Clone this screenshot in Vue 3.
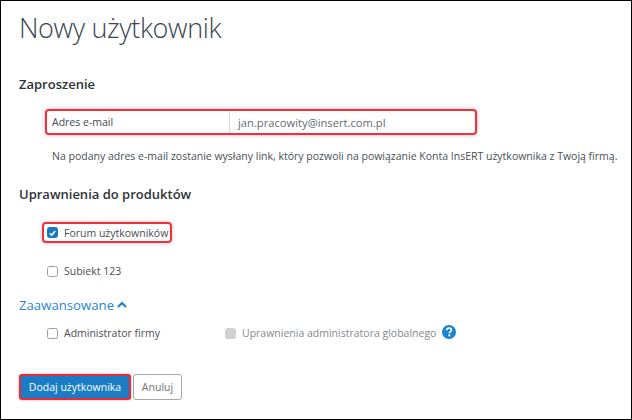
<template>
  <div class="page">
    <h1 class="title">Nowy użytkownik</h1>
    <h2 class="section invite">Zaproszenie</h2>
    <div class="mail-box">
      <div class="mail-label">Adres e-mail</div>
      <div class="mail-value">jan.pracowity@insert.com.pl</div>
    </div>
    <p class="note">Na podany adres e-mail zostanie wysłany link, który pozwoli na powiązanie Konta InsERT użytkownika z Twoją firmą.</p>
    <h2 class="section perms">Uprawnienia do produktów</h2>
    <div class="forum-box">
      <span class="check checked">
        <svg width="10" height="10" viewBox="0 0 10 10"><path d="M2 5.2 4.2 7.3 8 2.9" fill="none" stroke="#fff" stroke-width="1.7"/></svg>
      </span>
      <span class="lbl">Forum użytkowników</span>
    </div>
    <div class="row subiekt">
      <span class="check"></span>
      <span class="lbl">Subiekt 123</span>
    </div>
    <div class="advanced">
      <span>Zaawansowane</span>
      <svg width="10" height="8" viewBox="0 0 10 8"><path d="M1 6 5 2 9 6" fill="none" stroke="#1f86cc" stroke-width="2.2"/></svg>
    </div>
    <div class="row admin">
      <div class="admin-left">
        <span class="check"></span>
        <span class="lbl">Administrator firmy</span>
      </div>
      <span class="check disabled"></span>
      <span class="lbl muted">Uprawnienia administratora globalnego</span>
      <svg class="help" width="14" height="14" viewBox="0 0 14 14">
        <circle cx="7" cy="7" r="7" fill="#1a86cf"/>
        <path d="M4.7 5.3C4.8 3.9 5.8 3.2 7.1 3.2 8.5 3.2 9.4 4 9.4 5.1 9.4 6 8.9 6.4 8.2 6.9 7.6 7.3 7.3 7.6 7.3 8.3" fill="none" stroke="#fff" stroke-width="1.7"/>
        <rect x="6.3" y="9.4" width="2" height="1.9" fill="#fff"/>
      </svg>
    </div>
    <div class="actions">
      <button class="btn primary">Dodaj użytkownika</button>
      <button class="btn cancel">Anuluj</button>
    </div>
  </div>
</template>

<script setup>
</script>

<style>
html, body { margin: 0; background: #fff; }
</style>

<style scoped>
.page {
  box-sizing: border-box;
  width: 632px;
  height: 420px;
  border: 1px solid #000;
  padding: 0 0 0 18px;
  font-family: "Open Sans", "Noto Sans", sans-serif;
  color: #3c4146;
  background: #fff;
  overflow: hidden;
}
.title {
  margin: 0;
  padding-top: 7px;
  font-size: 27px;
  letter-spacing: -0.35px;
  line-height: 40px;
  font-weight: 300;
  color: #3b4550;
}
.section {
  margin: 0;
  font-size: 13px;
  font-weight: 600;
  line-height: 18px;
  color: #2f3338;
}
.invite { margin-top: 27px; }
.mail-box {
  display: flex;
  box-sizing: border-box;
  width: 432px;
  height: 26px;
  margin: 16px 0 0 26px;
  border: 2px solid #f0303c;
  border-radius: 4px;
  box-shadow: 0 0 4px rgba(0, 0, 0, .28);
  font-size: 10.5px;
  line-height: 23px;
}
.mail-label {
  width: 177px;
  padding-left: 5px;
  border-right: 1px solid #d5dae0;
  color: #44494e;
}
.mail-value {
  padding-left: 8px;
  font-size: 11.2px;
  color: #666b70;
}
.note {
  margin: 13px 0 0 33px;
  font-size: 10.5px;
  line-height: 16px;
  white-space: nowrap;
  color: #4a4f55;
}
.perms { margin-top: 21px; }
.forum-box {
  display: inline-flex;
  align-items: center;
  box-sizing: border-box;
  height: 21px;
  margin: 19px 0 0 23px;
  padding: 0 2px 0 3px;
  border: 2px solid #f0303c;
  border-radius: 4px;
  box-shadow: 0 0 4px rgba(0, 0, 0, .25);
}
.row {
  display: flex;
  align-items: center;
  height: 18px;
}
.subiekt { margin: 19px 0 0 28px; }
.check {
  display: inline-flex;
  align-items: center;
  justify-content: center;
  box-sizing: border-box;
  width: 11px;
  height: 11px;
  margin-right: 6px;
  border: 1px solid #9ba0a5;
  border-radius: 2.5px;
  background: #fff;
  flex: none;
}
.checked {
  border-color: #1a78c2;
  background: #1a78c2;
}
.disabled {
  border-color: #cfd0d2;
  background: #cfd0d2;
}
.lbl {
  font-size: 10.5px;
  line-height: 16px;
  white-space: nowrap;
  color: #494e53;
}
.muted { color: #858a90; }
.advanced {
  display: flex;
  align-items: center;
  gap: 3px;
  margin-top: 15px;
  height: 19px;
  font-size: 13.2px;
  font-weight: 500;
  color: #2a86cc;
}
.admin { margin: 10px 0 0 28px; }
.admin-left {
  display: flex;
  align-items: center;
  width: 178px;
}
.help { margin: -2px 0 0 6px; }
.actions {
  display: flex;
  gap: 2px;
  margin-top: 32px;
}
.btn {
  box-sizing: border-box;
  height: 26px;
  font-family: inherit;
  font-size: 10.5px;
  border-radius: 3px;
  padding: 0;
}
.primary {
  width: 112px;
  border: 2px solid #ec2a36;
  background: #1a7cc4;
  color: #fff;
  box-shadow: 0 0 3px rgba(0, 0, 0, .3);
}
.cancel {
  width: 49px;
  border: 1px solid #a4a8ac;
  background: #fff;
  color: #6d7277;
}
</style>
